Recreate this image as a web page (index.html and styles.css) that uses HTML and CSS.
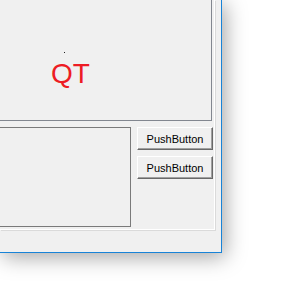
FILE: index.html
```html
<!DOCTYPE html>
<html lang="en">
<head>
  <meta charset="UTF-8" />
  <title>QT</title>
  <link rel="stylesheet" href="styles.css">
</head>
<body>
  <div class="window">
    <div class="pane">
      <div class="view">
        <div class="dot"></div>
        <div class="logo">QT</div>
      </div>
      <div class="lower">
        <div class="box"></div>
        <div class="buttons">
          <button class="push">PushButton</button>
          <button class="push">PushButton</button>
        </div>
      </div>
    </div>
  </div>
</body>
</html>
```

FILE: styles.css
```css
html, body {
  margin: 0;
  background: #fff;
  overflow: hidden;
}
body {
  font-family: 'Liberation Sans', Arial, sans-serif;
  width: 281px;
  height: 301px;
}
.window {
  width: 221px;
  height: 252px;
  background: #f0f0f0;
  border-right: 1px solid #1883d7;
  border-bottom: 1px solid #1883d7;
  box-shadow: 3px 4px 20px rgba(0, 0, 0, 0.36);
}
.pane {
  width: 214px;
  height: 229px;
  border-right: 1px solid #fff;
  border-bottom: 1px solid #fff;
  box-shadow: 1px 1px 0 #dadada;
  display: flex;
  flex-direction: column;
  gap: 6px;
}
.view {
  width: 211px;
  height: 68px;
  padding-top: 52px;
  border-right: 1px solid #828790;
  border-bottom: 1px solid #828790;
}
.dot {
  width: 1px;
  height: 1px;
  margin-left: 64px;
  background: #222;
}
.logo {
  color: #ed1c24;
  font-size: 28px;
  line-height: 31px;
  margin-top: 5px;
  padding-left: 51px;
}
.lower {
  display: flex;
  gap: 6px;
  height: 100px;
}
.box {
  width: 130px;
  height: 98px;
  border: 1px solid #7a7a7a;
  border-left: none;
}
.buttons {
  display: flex;
  flex-direction: column;
  gap: 6px;
}
.push {
  width: 76px;
  height: 23px;
  padding: 0;
  margin: 0;
  font-family: 'Liberation Sans', Arial, sans-serif;
  font-size: 11px;
  color: #000;
  background: #f0f0f0;
  border-top: 1px solid #fff;
  border-left: 1px solid #fff;
  border-right: 1px solid #696969;
  border-bottom: 1px solid #696969;
  box-shadow: inset -1px -1px 0 #a0a0a0;
}
```
